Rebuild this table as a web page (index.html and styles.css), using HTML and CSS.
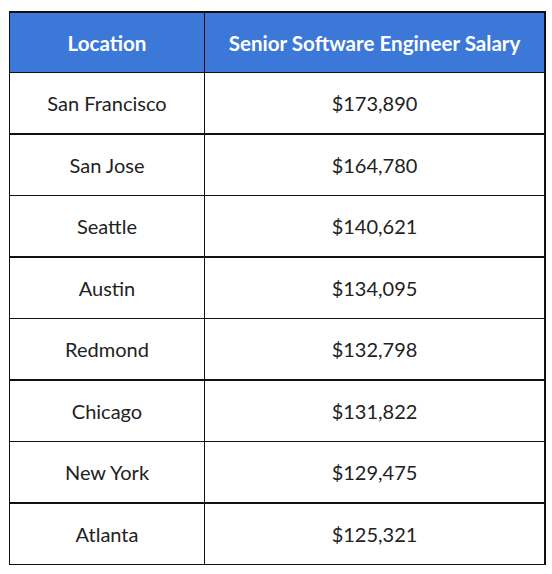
FILE: index.html
```html
<!DOCTYPE html>
<html>
<head>
<meta charset="utf-8">
<link rel="stylesheet" href="styles.css">
</head>
<body>
<div class="table">
  <div class="row head">
    <div class="cell">Location</div>
    <div class="cell">Senior Software Engineer Salary</div>
  </div>
  <div class="row thick">
    <div class="cell">San Francisco</div>
    <div class="cell">$173,890</div>
  </div>
  <div class="row">
    <div class="cell">San Jose</div>
    <div class="cell">$164,780</div>
  </div>
  <div class="row thick">
    <div class="cell">Seattle</div>
    <div class="cell">$140,621</div>
  </div>
  <div class="row">
    <div class="cell">Austin</div>
    <div class="cell">$134,095</div>
  </div>
  <div class="row thick">
    <div class="cell">Redmond</div>
    <div class="cell">$132,798</div>
  </div>
  <div class="row">
    <div class="cell">Chicago</div>
    <div class="cell">$131,822</div>
  </div>
  <div class="row thick">
    <div class="cell">New York</div>
    <div class="cell">$129,475</div>
  </div>
  <div class="row">
    <div class="cell">Atlanta</div>
    <div class="cell">$125,321</div>
  </div>
</div>
</body>
</html>
```

FILE: styles.css
```css
html, body {
  margin: 0;
  padding: 0;
  background: #ffffff;
}
body {
  font-family: Lato, "Liberation Sans", sans-serif;
  color: #222222;
}
.table {
  margin: 11px 0 0 9px;
  width: 537px;
  box-sizing: border-box;
  border-top: 2px solid #111;
  border-left: 1px solid #111;
  border-right: 2px solid #111;
  display: flex;
  flex-direction: column;
}
.row {
  display: grid;
  grid-template-columns: 194px 1fr;
  height: 61px;
  box-sizing: border-box;
  border-bottom: 1px solid #111;
}
.row.thick {
  height: 62px;
  border-bottom: 2px solid #111;
}
.row.head {
  height: 60px;
  background: #3c78d8;
  color: #ffffff;
  font-weight: 700;
}
.cell {
  display: flex;
  align-items: center;
  justify-content: center;
  font-size: 20px;
}
.head .cell {
  font-size: 20.6px;
}
.cell + .cell {
  border-left: 1px solid #111;
}
```
